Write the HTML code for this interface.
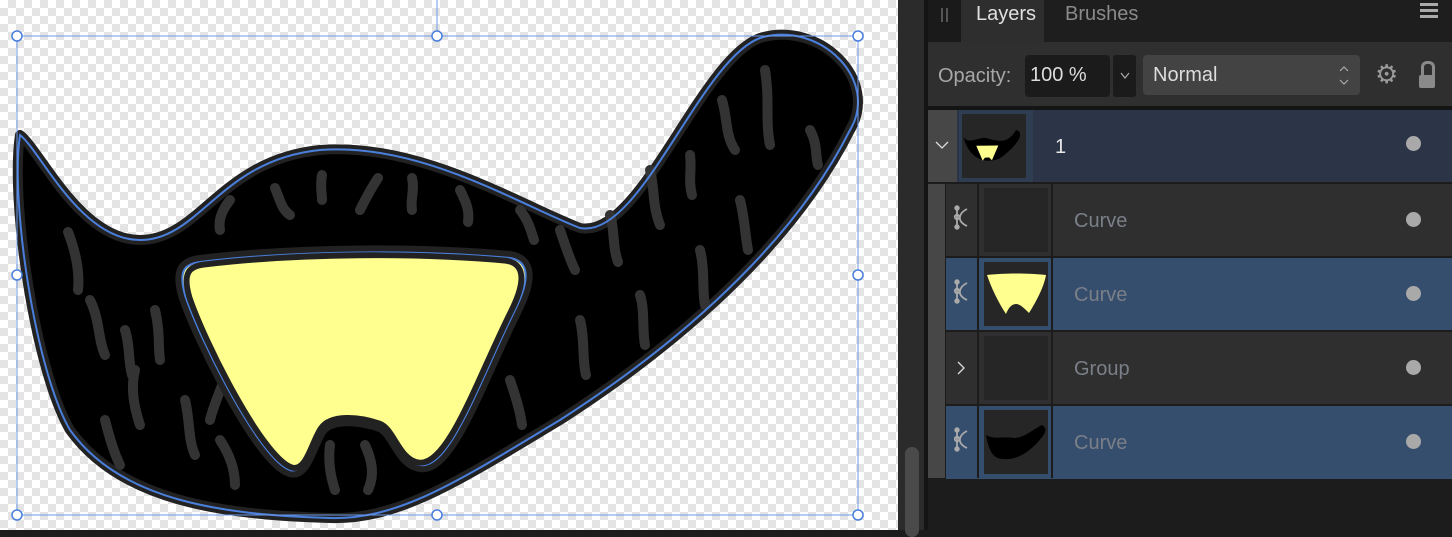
<!DOCTYPE html>
<html><head><meta charset="utf-8"><style>
body{margin:0;width:1452px;height:530px;overflow:hidden;background:#1c1c1c;font-family:"Liberation Sans",sans-serif;position:relative}
.abs{position:absolute}
#canvas{left:0;top:0;width:898px;height:530px;background-color:#fff;background-image:linear-gradient(45deg,#e4e4e4 25%,transparent 25%,transparent 75%,#e4e4e4 75%),linear-gradient(45deg,#e4e4e4 25%,transparent 25%,transparent 75%,#e4e4e4 75%);background-size:16px 16px;background-position:0 0,8px 8px}
.row{position:absolute;left:928px;width:524px;height:73px}
.txt{position:absolute;font-size:20px;color:#7a7f88}
.dot{position:absolute;left:1406px;width:15px;height:15px;border-radius:50%;background:#a9a9a9}
.thumb{position:absolute;width:64px;height:64px;background:#262626}
</style></head><body>
<div id="canvas" class="abs">
<svg width="898" height="530" style="position:absolute;left:0;top:0">
<path d="M20,135 C40,150 80,240 140,240 C200,240 220,160 320,150 C420,142 520,205 580,228 C640,240 700,60 760,38 C820,20 880,80 850,130 C800,230 700,330 560,420 C460,480 400,520 330,518 C220,515 120,500 70,430 C35,370 10,200 20,135 Z" fill="#000" stroke="#222" stroke-width="10" stroke-linejoin="round"/>
<g stroke="#333" stroke-width="10" stroke-linecap="round" fill="none">
<path d="M68,232 C75,250 80,270 78,290"/><path d="M90,300 C100,320 98,340 105,355"/><path d="M125,330 C130,345 128,360 132,375"/>
<path d="M155,310 C160,330 158,345 160,360"/><path d="M230,200 C222,210 218,220 220,230"/><path d="M275,188 C280,200 282,210 290,215"/>
<path d="M322,175 C320,185 322,195 322,200"/><path d="M378,178 C370,190 365,200 360,210"/><path d="M412,178 C415,190 410,200 412,210"/>
<path d="M460,190 C465,200 470,210 468,222"/><path d="M520,210 C528,220 530,228 534,240"/><path d="M560,230 C565,245 570,260 575,270"/>
<path d="M610,215 C615,230 612,245 618,262"/><path d="M650,170 C655,190 652,205 660,225"/><path d="M690,155 C692,170 688,180 692,195"/>
<path d="M722,100 C728,120 725,135 735,150"/><path d="M765,70 C770,100 765,120 770,145"/><path d="M810,130 C818,145 815,155 818,165"/>
<path d="M740,200 C745,220 745,235 748,250"/><path d="M700,250 C705,270 702,290 705,305"/><path d="M640,295 C645,310 642,330 645,345"/>
<path d="M580,320 C585,340 582,360 586,375"/><path d="M510,380 C515,395 520,410 522,425"/><path d="M232,360 C225,380 215,400 210,420"/>
<path d="M220,440 C230,455 235,470 235,485"/><path d="M330,445 C328,460 330,475 335,490"/><path d="M365,445 C372,460 375,475 368,490"/>
<path d="M135,370 C130,390 135,410 140,425"/><path d="M105,420 C110,440 115,455 120,465"/>
<path d="M185,400 C190,420 188,440 195,455"/>
</g>
<path d="M20,135 C40,150 80,240 140,240 C200,240 220,160 320,150 C420,142 520,205 580,228 C640,240 700,60 760,38 C820,20 880,80 850,130 C800,230 700,330 560,420 C460,480 400,520 330,518 C220,515 120,500 70,430 C35,370 10,200 20,135 Z" fill="none" stroke="#4a7fdc" stroke-width="2"/>
<path d="M200,262 C300,250 420,250 510,258 C535,262 525,290 515,310 C480,380 450,470 420,465 C400,462 395,430 380,425 C360,418 330,415 320,430 C310,445 305,475 290,470 C260,460 200,340 185,295 C178,270 185,264 200,262 Z" fill="#ffff8f" stroke="#222" stroke-width="14" stroke-linejoin="round"/>
<path d="M200,262 C300,250 420,250 510,258 C535,262 525,290 515,310 C480,380 450,470 420,465 C400,462 395,430 380,425 C360,418 330,415 320,430 C310,445 305,475 290,470 C260,460 200,340 185,295 C178,270 185,264 200,262 Z" fill="#ffff8f" stroke="#4a7fdc" stroke-width="2"/>
<path d="M200,262 C300,250 420,250 510,258 C535,262 525,290 515,310 C480,380 450,470 420,465 C400,462 395,430 380,425 C360,418 330,415 320,430 C310,445 305,475 290,470 C260,460 200,340 185,295 C178,270 185,264 200,262 Z" fill="#ffff8f" stroke="#222" stroke-width="6" transform="translate(354,365) scale(0.975) translate(-354,-365)"/>
<g stroke="#6d98e6" stroke-width="1" fill="none"><rect x="17" y="36" width="841" height="479"/><line x1="437" y1="0" x2="437" y2="36"/></g>
<g fill="#fff" stroke="#4a7fdc" stroke-width="1.5">
<circle cx="17" cy="36" r="5"/><circle cx="437" cy="36" r="5"/><circle cx="858" cy="36" r="5"/>
<circle cx="17" cy="275" r="5"/><circle cx="858" cy="275" r="5"/>
<circle cx="17" cy="515" r="5"/><circle cx="437" cy="515" r="5"/><circle cx="858" cy="515" r="5"/></g>
</svg></div>
<div class="abs" style="left:898px;top:0;width:28px;height:530px;background:#2b2b2b"></div>
<div class="abs" style="left:905px;top:447px;width:14px;height:90px;border-radius:7px;background:#4a4a4a"></div>
<div class="abs" style="left:924px;top:0;width:4px;height:530px;background:#141414"></div>
<div class="abs" style="left:928px;top:0;width:524px;height:42px;background:#1e1e1e"></div>
<div class="abs" style="left:928px;top:0;width:33px;height:42px;background:#1a1a1a"></div>
<div class="abs" style="left:941px;top:8px;width:2px;height:14px;background:#555"></div><div class="abs" style="left:946px;top:8px;width:2px;height:14px;background:#555"></div>
<div class="abs" style="left:961px;top:0;width:83px;height:42px;background:#2e2e2e"></div>
<div class="txt" style="left:976px;top:3px;color:#e0e0e0">Layers</div>
<div class="txt" style="left:1065px;top:3px;color:#8a8a8a">Brushes</div>
<div class="abs" style="left:1420px;top:3px;width:18px;height:3px;background:#aaa;box-shadow:0 6px 0 #aaa,0 12px 0 #aaa"></div>
<div class="abs" style="left:928px;top:42px;width:524px;height:64px;background:#2f2f2f"></div>
<div class="txt" style="left:938px;top:65px;color:#a8a8a8">Opacity:</div>
<div class="abs" style="left:1025px;top:55px;width:85px;height:42px;background:#1b1b1b;border-radius:4px"></div>
<div class="txt" style="left:1030px;top:64px;color:#ddd">100 %</div>
<div class="abs" style="left:1113px;top:55px;width:23px;height:42px;background:#1b1b1b;border-radius:3px"></div>
<svg class="abs" style="left:1119px;top:71px" width="12" height="10"><path d="M2,2 L6,7 L10,2" stroke="#aaa" stroke-width="1.2" fill="none"/></svg>
<div class="abs" style="left:1143px;top:55px;width:217px;height:40px;background:#434343;border-radius:4px"></div>
<div class="txt" style="left:1153px;top:64px;color:#ddd">Normal</div>
<svg class="abs" style="left:1337px;top:64px" width="14" height="24"><path d="M3,7 L7,3 L11,7 M3,16 L7,20 L11,16" stroke="#aaa" stroke-width="1.2" fill="none"/></svg>
<div class="abs" style="left:1375px;top:61px;color:#9a9a9a;font-size:26px;line-height:26px">&#9881;</div>
<div class="abs" style="left:1419px;top:75px;width:16px;height:13px;background:#8a8a8a;border-radius:2px"></div>
<div class="abs" style="left:1421px;top:61px;width:8px;height:14px;border:3px solid #8a8a8a;border-bottom:none;border-radius:6px 6px 0 0"></div>
<div class="abs" style="left:928px;top:106px;width:524px;height:4px;background:#141414"></div>
<div class="row" style="top:110px;background:#2b3547"></div>
<div class="abs" style="left:928px;top:110px;width:29px;height:72px;background:#474747"></div>
<svg class="abs" style="left:934px;top:139px" width="16" height="12"><path d="M2,3 L8,9 L14,3" stroke="#ddd" stroke-width="1.3" fill="none"/></svg>
<div class="abs" style="left:959px;top:110px;width:74px;height:72px;background:#2f3d52"></div>
<div class="thumb" style="left:962px;top:114px"><svg width="64" height="64" viewBox="0 0 898 530"><path d="M20,135 C80,240 200,160 320,150 C520,205 640,240 760,38 C880,80 800,230 560,420 C400,520 110,500 20,135Z" fill="#000"/><path d="M200,262 L510,258 L420,465 L380,425 L320,430 L290,470Z" fill="#ffff8f"/></svg></div>
<div class="txt" style="left:1055px;top:136px;color:#e8e8e8">1</div>
<div class="dot" style="top:136px"></div>
<div class="abs" style="left:928px;top:182px;width:524px;height:2px;background:#1c1c1c"></div>
<div class="abs" style="left:928px;top:184px;width:17px;height:294px;background:#474747"></div>
<div class="row" style="top:184px;left:946px;width:506px;background:#2f2f2f"></div>
<div class="row" style="top:258px;left:946px;width:506px;background:#364e6e"></div>
<div class="row" style="top:332px;left:946px;width:506px;background:#2f2f2f"></div>
<div class="row" style="top:406px;left:946px;width:506px;background:#364e6e"></div>
<div class="abs" style="left:977px;top:184px;width:2px;height:294px;background:#1c1c1c"></div>
<div class="abs" style="left:1051px;top:184px;width:2px;height:294px;background:#1c1c1c"></div>
<div class="abs" style="left:946px;top:256px;width:506px;height:2px;background:#1c1c1c"></div>
<div class="abs" style="left:946px;top:330px;width:506px;height:2px;background:#1c1c1c"></div>
<div class="abs" style="left:946px;top:404px;width:506px;height:2px;background:#1c1c1c"></div>
<div class="thumb" style="left:984px;top:188px"></div>
<div class="thumb" style="left:984px;top:262px"><svg width="64" height="64"><path d="M3,13 C20,11 45,11 62,13 C60,25 52,40 45,51 C40,46 36,42 32,42 C27,42 24,47 22,52 C14,40 7,25 3,13Z" fill="#ffff8f"/></svg></div>
<div class="thumb" style="left:984px;top:336px"></div>
<div class="thumb" style="left:984px;top:410px"><svg width="64" height="64"><path d="M2,25 C10,30 20,26 30,28 C40,28 48,20 58,15 C63,18 62,22 58,27 C48,40 35,50 20,49 C8,49 5,40 2,25Z" fill="#000"/></svg></div>
<svg class="abs" style="left:950px;top:205px" width="22" height="26"><g stroke="#aaa" stroke-width="1.8" fill="none"><line x1="7" y1="3" x2="7" y2="22"/><path d="M17,4 C9,8 6,16 17,21"/><circle cx="7" cy="3" r="1.8" fill="#aaa"/><circle cx="7" cy="12" r="2.2"/><circle cx="7" cy="22" r="1.8" fill="#aaa"/></g></svg>
<svg class="abs" style="left:950px;top:279px" width="22" height="26"><g stroke="#aaa" stroke-width="1.8" fill="none"><line x1="7" y1="3" x2="7" y2="22"/><path d="M17,4 C9,8 6,16 17,21"/><circle cx="7" cy="3" r="1.8" fill="#aaa"/><circle cx="7" cy="12" r="2.2"/><circle cx="7" cy="22" r="1.8" fill="#aaa"/></g></svg>
<svg class="abs" style="left:950px;top:427px" width="22" height="26"><g stroke="#aaa" stroke-width="1.8" fill="none"><line x1="7" y1="3" x2="7" y2="22"/><path d="M17,4 C9,8 6,16 17,21"/><circle cx="7" cy="3" r="1.8" fill="#aaa"/><circle cx="7" cy="12" r="2.2"/><circle cx="7" cy="22" r="1.8" fill="#aaa"/></g></svg>
<svg class="abs" style="left:955px;top:360px" width="12" height="16"><path d="M3,2 L9,8 L3,14" stroke="#ddd" stroke-width="1.3" fill="none"/></svg>
<div class="txt" style="left:1074px;top:210px">Curve</div>
<div class="txt" style="left:1074px;top:284px">Curve</div>
<div class="txt" style="left:1074px;top:358px">Group</div>
<div class="txt" style="left:1074px;top:432px">Curve</div>
<div class="dot" style="top:212px"></div><div class="dot" style="top:286px"></div><div class="dot" style="top:360px"></div><div class="dot" style="top:434px"></div>
</body></html>
